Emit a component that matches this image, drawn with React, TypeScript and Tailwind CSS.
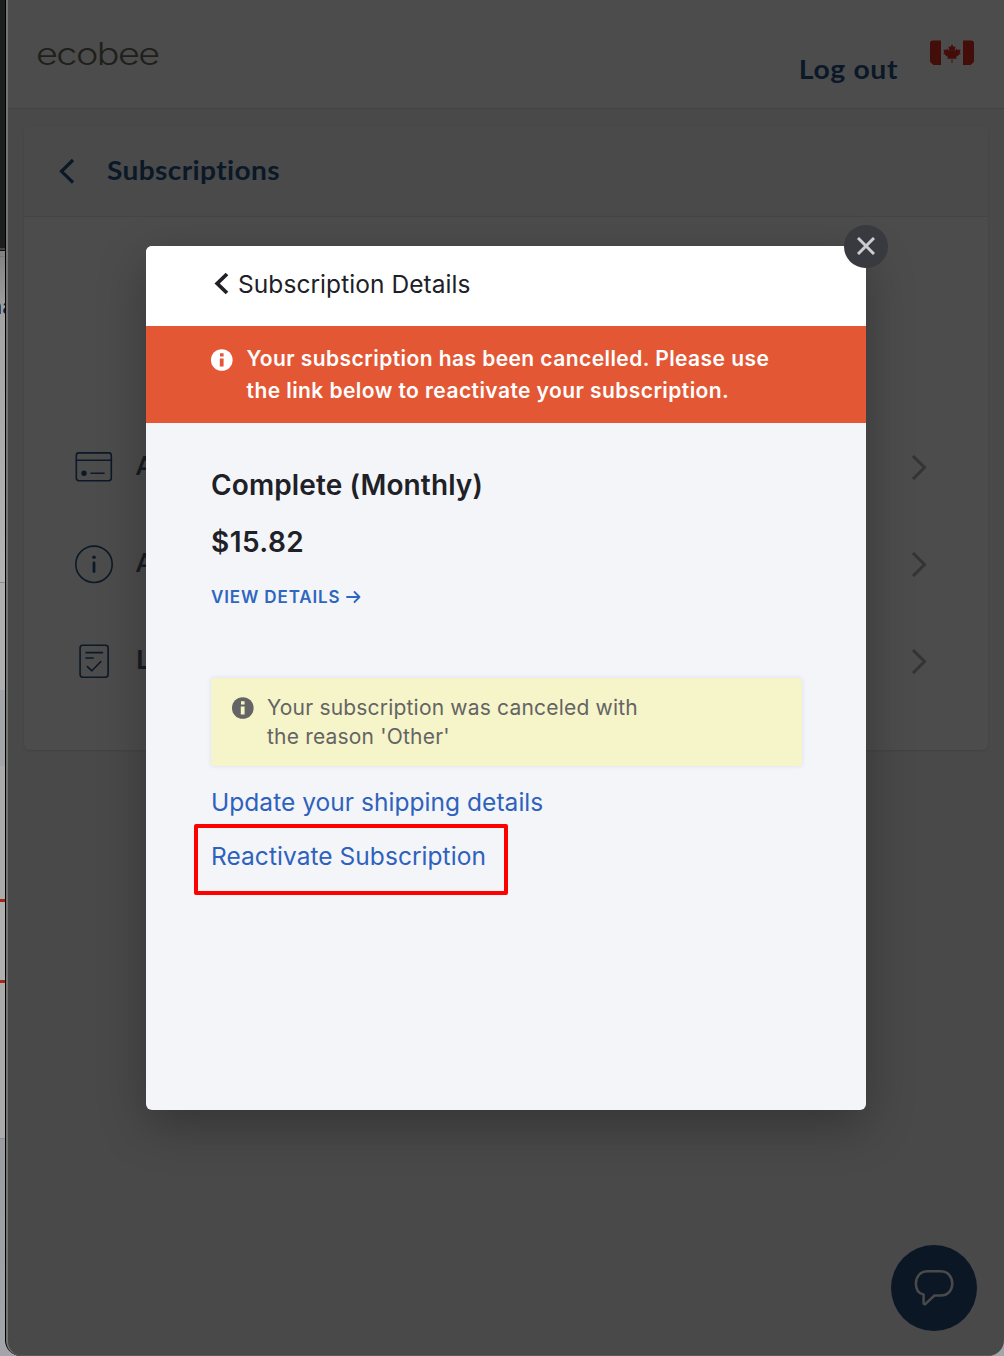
import React from "react";

function InfoBadge({ color, hole }: { color: string; hole: string }) {
  return (
    <svg width="22" height="22" viewBox="0 0 22 22" className="shrink-0">
      <circle cx="10.8" cy="11" r="10.8" fill={color} />
      <path d="M9 4.200h3.600v3.200H9zM8.800 9.400h3.800v8.200H8.800z" fill={hole} />
    </svg>
  );
}

function CardIcon() {
  return (
    <svg width="40" height="40" viewBox="0 0 40 40" fill="none" stroke="#0b1928" strokeWidth="1.6" strokeLinecap="round">
      <rect x="2.3" y="5.900" width="35" height="27.800" rx="2.6" />
      <path d="M2.500 13.300h35M17 26.200h13" />
      <circle cx="10" cy="26.200" r="1.9" fill="#0b1928" />
    </svg>
  );
}

function InfoIcon() {
  return (
    <svg width="40" height="40" viewBox="0 0 40 40" fill="none" stroke="#0b1928" strokeLinecap="round">
      <circle cx="20" cy="20.300" r="18.2" strokeWidth="1.6" />
      <path d="M20 19v8.500" strokeWidth="2.800" />
      <circle cx="20" cy="13.300" r="1.8" fill="#0b1928" stroke="none" />
    </svg>
  );
}

function DocIcon() {
  return (
    <svg width="40" height="40" viewBox="0 0 40 40" fill="none" stroke="#0b1928" strokeWidth="1.6" strokeLinecap="round" strokeLinejoin="round">
      <rect x="6.1" y="4.2" width="28" height="32" rx="2.6" />
      <path d="M12 11.6h16.500M12 17h7.200M13.400 25.600l4.500 4.200 9-9.300" />
    </svg>
  );
}

function Flag() {
  return (
    <svg width="46" height="27" viewBox="0 0 46 27">
      <path d="M4 0.500h8V25H4.500L1 22V3.500a3 3 0 0 1 3-3zM34 0.500h8a3 3 0 0 1 3 3V22L41.500 25H34z" fill="#430d0a" />
      <path
        d="M23 4l-1.500 3-2-.8 1 5-2.500-2.700-.6 1.500-3-.5 1 3-1.200.8 4.800 4-.5 1.700 4.100-.6-.1 4.600h1l-.1-4.600 4.100.6-.5-1.700 4.800-4-1.200-.8 1-3-3 .5-.6-1.500-2.500 2.700 1-5-2 .8z"
        fill="#430d0a"
      />
    </svg>
  );
}

const rows = [
  { label: "Account", icon: <CardIcon /> },
  { label: "About", icon: <InfoIcon /> },
  { label: "Legal", icon: <DocIcon /> },
];

/* Sliver of the window that sits behind the browser window. */
function BackgroundWindow() {
  return (
    <div className="-mr-[9px] flex w-[14px] shrink-0 flex-col overflow-hidden bg-[#ababab]">
      <div className="h-[248px] bg-[#1d1f1e]" />
      <div className="h-[2px] bg-[#444]" />
      <div className="h-[1px] bg-[#111]" />
      <div className="h-[331px] bg-gradient-to-b from-[#818181] via-[#a4a4a4] via-20% to-[#b3b3b3]">
        <div className="mt-[5px] h-px bg-[#777]" />
        <div className="mt-[37px] -ml-[11px] h-[24px] font-[Inter] text-[22px] leading-[24px] font-medium text-[#151d45]">na</div>
      </div>
      <div className="h-px bg-[#858b99]" />
      <div className="h-[107px] bg-[#afafaf]" />
      <div className="h-[76px] bg-[#a2a4a9]" />
      <div className="h-[133px] bg-[#ababab]" />
      <div className="h-[3px] bg-[#a9251b]" />
      <div className="h-[78px] bg-[#b0b0b0]" />
      <div className="h-[3px] bg-[#a9251b]" />
      <div className="h-[155px] bg-[#ababab]" />
      <div className="h-px bg-[#8d8e91]" />
      <div className="flex-1 bg-gradient-to-b from-[#9b9ca1] to-[#a4a5aa]" />
    </div>
  );
}

function AccountPage() {
  return (
    <div className="relative flex min-w-0 flex-1 flex-col overflow-hidden rounded-b-[16px] border-l border-black bg-[#494949]">
      <div className="flex flex-1 flex-col rounded-b-[15px] border-b border-l-2 border-b-[#595959] border-l-[#737373]">
        <header className="flex h-[109px] items-start border-b border-[#434343] bg-[#4c4c4c] pl-[28px]">
          <div className="mt-[37px] w-[124px] origin-left scale-x-[1.22] font-[Inter] text-[31px] leading-[34px] font-light tracking-[-1.300px] whitespace-nowrap text-[#1f1f1b]">
            ecobee
          </div>
          <div className="mt-[53px] ml-auto origin-right scale-x-[1.090] font-[Lato] text-[26px] leading-[32px] font-bold tracking-[0.600px] text-[#0a1828]">Log out</div>
          <div className="mt-[40px] mr-[29px] ml-[31px]">
            <Flag />
          </div>
        </header>
        <section className="mt-[17px] mr-[16px] ml-[16px] h-[624px] rounded-[6px] bg-[#4c4c4c] shadow-[0_1px_2px_0px_#424244]">
          <div className="flex h-[91px] items-center rounded-t-[6px] border-b border-[#444] bg-[#4a4a4a] pl-[35px]">
            <svg width="16" height="26" viewBox="0 0 16 26" fill="none" stroke="#0a1828" strokeWidth="3.2">
              <path d="M14 2L2.500 13.300 14 24.500" />
            </svg>
            <h1 className="-mt-[3px] ml-[32px] origin-left scale-x-[1.080] font-[Lato] text-[26px] leading-[32px] font-bold tracking-[0.350px] text-[#0a1828]">Subscriptions</h1>
          </div>
          <ul className="pt-[201px]">
            {rows.map((row) => (
              <li key={row.label} className="flex h-[97px] items-center pr-[61px] pl-[50px]">
                {row.icon}
                <span className="-mt-[3px] ml-[22px] font-[Lato] text-[26px] leading-[32px] font-bold text-[#181c22]">{row.label}</span>
                <svg className="ml-auto" width="16" height="26" viewBox="0 0 16 26" fill="none" stroke="#343434" strokeWidth="3">
                  <path d="M2 2L13.500 13.500 2 25" />
                </svg>
              </li>
            ))}
          </ul>
        </section>
      </div>
      <button className="absolute right-[27px] bottom-[25px] flex size-[86px] items-center justify-center rounded-full bg-[#0b1725]">
        <svg width="40" height="38" viewBox="0 0 40 38" fill="none" stroke="#4a4a4a" strokeWidth="2.500" strokeLinejoin="round">
          <path d="M13.500 2.200h13.200c7 0 11.600 5.500 11.600 12.300s-4.600 12-11.600 12h-6.200l-9 8.300c-.8.700-1.900.4-1.900-.8v-8.600C4 24.500 1.900 20 1.900 14.500 1.900 7.500 6.500 2.200 13.500 2.200z" />
        </svg>
      </button>
    </div>
  );
}

function SubscriptionModal() {
  return (
    <div className="absolute top-[246px] left-[146px] flex h-[864px] w-[720px] flex-col rounded-[6px] bg-[#f4f5f9] font-[Inter] shadow-[0_16px_48px_rgba(0,0,0,0.28)]">
      <header className="flex h-[80px] shrink-0 items-start rounded-t-[6px] bg-white pl-[67px]">
        <svg className="mt-[26px]" width="16" height="23" viewBox="0 0 16 23" fill="none" stroke="#202127" strokeWidth="3.800">
          <path d="M14 2L4.200 11.500 14 21" />
        </svg>
        <h2 className="mt-[22px] ml-[9px] text-[24.500px] leading-[32px] tracking-[0.060px] whitespace-nowrap text-[#202127]">Subscription Details</h2>
      </header>
      <div className="flex h-[97px] shrink-0 items-start bg-[#e45735] pt-[17px] pl-[65px] text-white">
        <div className="mt-[6px]">
          <InfoBadge color="#fff" hole="#e45735" />
        </div>
        <p className="ml-[13.500px] text-[21px] leading-[32px] font-semibold tracking-[0.430px] whitespace-nowrap">
          Your subscription has been cancelled. Please use
          <br />
          the link below to reactivate your subscription.
        </p>
      </div>
      <div className="flex flex-col items-start px-[65px] pt-[44px]">
        <h3 className="text-[28px] leading-[36px] font-semibold tracking-[0.120px] whitespace-nowrap text-[#202127]">Complete (Monthly)</h3>
        <p className="mt-[21px] text-[28px] leading-[36px] font-semibold tracking-[0.450px] text-[#202127]">$15.82</p>
        <a className="mt-[25px] flex items-center text-[17px] leading-[24px] font-semibold tracking-[0.870px] whitespace-nowrap text-[#2e66c1]">
          VIEW DETAILS
          <svg className="ml-[6px]" width="15" height="14" viewBox="0 0 15 14" fill="none" stroke="#2e66c1" strokeWidth="1.800" strokeLinecap="round" strokeLinejoin="round">
            <path d="M1 7h12.500M8.500 2l5 5-5 5" />
          </svg>
        </a>
        <div className="mt-[69px] flex h-[88px] w-[591px] items-start rounded-[4px] bg-[#f6f4c9] pt-[15px] pl-[21px] text-[#646464] shadow-[0_0_4px_rgba(215,220,245,0.9)]">
          <div className="mt-[4px]">
            <InfoBadge color="#646464" hole="#f6f4c9" />
          </div>
          <p className="ml-[13px] text-[21px] leading-[29px] tracking-[0.190px] whitespace-nowrap">
            Your subscription was canceled with
            <br />
            the reason 'Other'
          </p>
        </div>
        <a className="mt-[19px] text-[24.500px] leading-[34px] tracking-[0.040px] whitespace-nowrap text-[#2e62bd]">Update your shipping details</a>
        <a className="mt-[5px] -ml-[17px] flex h-[71px] w-[314px] rounded-[2px] border-[4px] border-[#fe0000] pt-[11px] pl-[13px] text-[24.500px] leading-[34px] tracking-[0.050px] whitespace-nowrap text-[#2e62bd]">
          Reactivate Subscription
        </a>
      </div>
      <button className="absolute -top-[21px] -right-[22px] flex h-[43px] w-[44px] items-center justify-center rounded-full bg-[#393a40] pb-[2px]">
        <svg width="18" height="18" viewBox="0 0 18 18" stroke="#cdcdd0" strokeWidth="3">
          <path d="M1 1l16 16M17 1L1 17" />
        </svg>
      </button>
    </div>
  );
}

export default function App() {
  return (
    <div className="relative flex h-[1356px] w-[1004px] overflow-hidden bg-[#a4a5aa]">
      <BackgroundWindow />
      <AccountPage />
      <SubscriptionModal />
    </div>
  );
}
